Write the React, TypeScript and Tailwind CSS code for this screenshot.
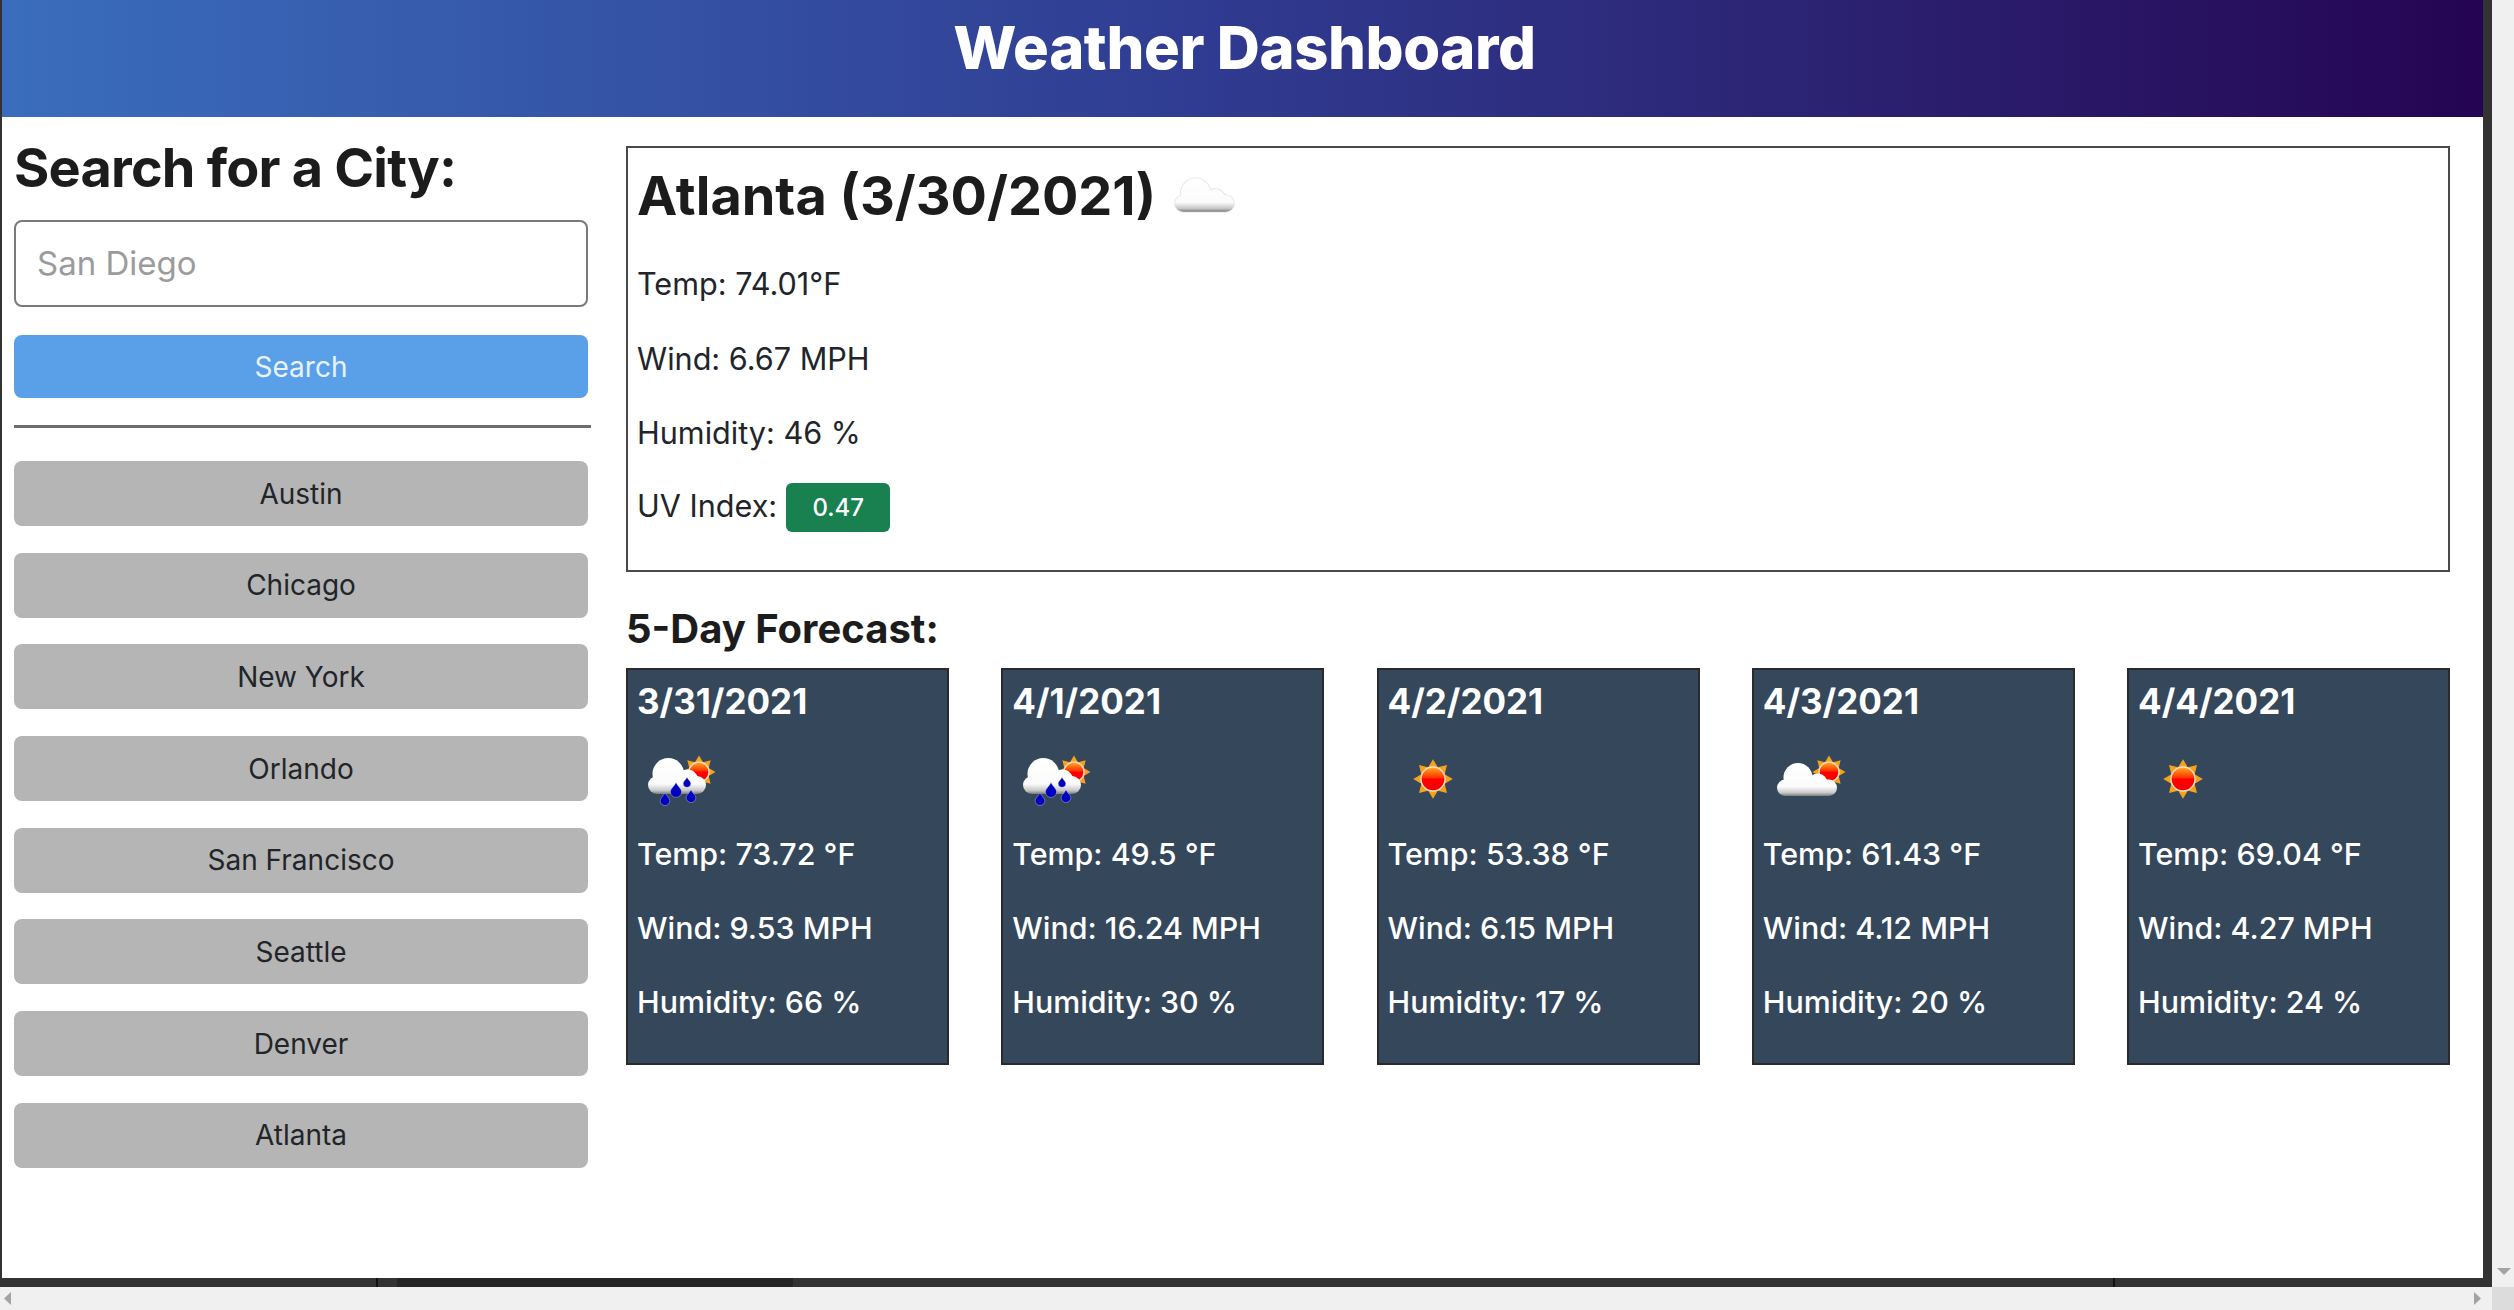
import { useId } from "react";

const cities = ["Austin", "Chicago", "New York", "Orlando", "San Francisco", "Seattle", "Denver", "Atlanta"];

type Kind = "rain" | "sun" | "cloudsun";

const forecast: { date: string; kind: Kind; temp: string; wind: string; humidity: string }[] = [
  { date: "3/31/2021", kind: "rain", temp: "73.72", wind: "9.53", humidity: "66" },
  { date: "4/1/2021", kind: "rain", temp: "49.5", wind: "16.24", humidity: "30" },
  { date: "4/2/2021", kind: "sun", temp: "53.38", wind: "6.15", humidity: "17" },
  { date: "4/3/2021", kind: "cloudsun", temp: "61.43", wind: "4.12", humidity: "20" },
  { date: "4/4/2021", kind: "sun", temp: "69.04", wind: "4.27", humidity: "24" },
];

function Sun({ cx, cy, r }: { cx: number; cy: number; r: number }) {
  const id = useId();
  const points: string[] = [];
  for (let i = 0; i < 16; i++) {
    const a = (i * Math.PI) / 8 - Math.PI / 2;
    const d = i % 2 === 0 ? r * 1.65 : r * 1.05;
    points.push(`${cx + d * Math.cos(a)},${cy + d * Math.sin(a)}`);
  }
  return (
    <g>
      <defs>
        <linearGradient id={id} x1="0" y1="0" x2="0" y2="1">
          <stop offset="0" stopColor="#ffb020" />
          <stop offset="0.45" stopColor="#ff3000" />
          <stop offset="0.5" stopColor="#ff0000" />
          <stop offset="1" stopColor="#f40000" />
        </linearGradient>
      </defs>
      <polygon points={points.join(" ")} fill="#f5a21c" />
      <circle cx={cx} cy={cy} r={r} fill={`url(#${id})`} stroke="#ffdcc0" strokeWidth="1.4" />
    </g>
  );
}

function Cloud({ x, y, w, h, outline }: { x: number; y: number; w: number; h: number; outline?: boolean }) {
  const id = useId();
  const bump = h * 0.44;
  const shapes = (
    <>
      <rect x={x} y={y + h * 0.5} width={w} height={h * 0.5} rx={h * 0.25} />
      <circle cx={x + w * 0.35} cy={y + bump} r={bump} />
      <circle cx={x + w * 0.68} cy={y + h * 0.62} r={h * 0.3} />
    </>
  );
  return (
    <g>
      <defs>
        <linearGradient id={id} gradientUnits="userSpaceOnUse" x1="0" y1={y} x2="0" y2={y + h}>
          <stop offset="0" stopColor="#ffffff" />
          <stop offset="0.72" stopColor="#fbfbfb" />
          <stop offset="0.9" stopColor="#c8c8c8" />
          <stop offset="1" stopColor="#7c7c7c" />
        </linearGradient>
      </defs>
      {outline && (
        <g fill="#e2e2e2" stroke="#e2e2e2" strokeWidth="1.6">
          {shapes}
        </g>
      )}
      <g fill={`url(#${id})`}>{shapes}</g>
    </g>
  );
}

function Drop({ x, y, s }: { x: number; y: number; s: number }) {
  return (
    <path
      d={`M${x} ${y - s * 1.5} C${x + s * 0.4} ${y - s * 0.7} ${x + s} ${y - s * 0.4} ${x + s} ${y + s * 0.15} A${s} ${s} 0 0 1 ${x - s} ${y + s * 0.15} C${x - s} ${y - s * 0.4} ${x - s * 0.4} ${y - s * 0.7} ${x} ${y - s * 1.5}Z`}
      fill="#0000c0"
      stroke="#e8e8f0"
      strokeOpacity="0.45"
      strokeWidth="0.8"
    />
  );
}

function WeatherIcon({ kind }: { kind: Kind }) {
  return (
    <svg viewBox="0 0 90 70" className="mt-[21px] w-[90px] h-[70px] block">
      {kind === "sun" && <Sun cx={45} cy={35} r={12} />}
      {kind === "rain" && (
        <>
          <Sun cx={62} cy={28} r={10} />
          <Cloud x={11} y={14} w={58} h={36} />
          <Drop x={28} y={56} s={4.8} />
          <Drop x={39} y={47} s={5.6} />
          <Drop x={54} y={53} s={4.8} />
          <Drop x={50} y={39} s={3.8} />
        </>
      )}
      {kind === "cloudsun" && (
        <>
          <Sun cx={66} cy={28} r={10} />
          <Cloud x={14} y={19} w={60} h={33} />
        </>
      )}
    </svg>
  );
}

function Arrow({ dir }: { dir: "left" | "right" | "down" }) {
  if (dir === "down") {
    return (
      <svg viewBox="0 0 14 7" className="w-[14px] h-[7px] block">
        <path d="M0 0H14L7 7Z" fill="#a3a3a3" />
      </svg>
    );
  }
  return (
    <svg viewBox="0 0 7 13" className="w-[7px] h-[13px] block">
      <path d={dir === "left" ? "M7 0V13L0 6.5Z" : "M0 0V13L7 6.5Z"} fill="#a3a3a3" />
    </svg>
  );
}

export default function App() {
  return (
    <div className="h-screen flex flex-col overflow-hidden bg-[#f0f0f0] font-['Inter',sans-serif] text-[#212529]">
      <div className="flex flex-1 min-h-0">
        <div className="flex-1 min-w-0 flex flex-col">
          <div className="flex-1 min-h-0 flex flex-col bg-white border-l-2 border-r-[9px] border-[#333333]">
            <header className="h-[117px] shrink-0 flex items-center justify-center pb-[21px] pl-[4px] bg-gradient-to-r from-[#3a6dbd] via-[#2f3a8f] to-[#240453]">
              <h1 className="text-[59.7px] leading-none font-extrabold tracking-[-0.4px] text-white">Weather Dashboard</h1>
            </header>

            <div className="flex-1 min-h-0 flex">
              <aside className="w-[624px] shrink-0 pl-3 pt-[22px]">
                <h2 className="text-[54px] leading-[58px] font-bold tracking-[-0.8px] text-[#1c1c1c]">Search for a City:</h2>
                <input
                  readOnly
                  placeholder="San Diego"
                  className="block mt-[23px] w-[574px] h-[87px] px-[21px] pb-[2px] text-[33px] bg-white border-2 border-[#7a7a7a] rounded-[8px] placeholder:text-[#9b9b9b] outline-none"
                />
                <button className="block mt-7 w-[574px] h-[63px] rounded-[8px] bg-[#5aa0e9] text-[28px] text-[#e9f2fc]">
                  Search
                </button>
                <hr className="mt-[27px] w-[577px] border-t-[3px] border-[#6e6e6e]" />
                <div className="mt-[33px] flex flex-col gap-[26.7px] w-[574px]">
                  {cities.map((c) => (
                    <button key={c} className="h-[65px] rounded-[8px] bg-[#b5b5b5] text-[28px] text-[#212529]">
                      {c}
                    </button>
                  ))}
                </div>
              </aside>

              <main className="w-[1824px] pt-[29px]">
                <section className="h-[426px] border-2 border-[#4a4a4a] pl-[9px] pt-[18px]">
                  <div className="flex items-center h-[60px]">
                    <h2 className="text-[54px] leading-none font-bold text-[#1c1c1c]">Atlanta (3/30/2021)</h2>
                    <svg viewBox="-1 -1 62 36" className="ml-[18px] mt-[-2px] w-[61px] h-[36px]">
                      <Cloud x={0} y={0} w={60} h={34} outline />
                    </svg>
                  </div>
                  <p className="mt-[38px] text-[30.6px] leading-[40px]">Temp: 74.01°F</p>
                  <p className="mt-[35px] text-[30.6px] leading-[40px]">Wind: 6.67 MPH</p>
                  <p className="mt-[34px] text-[30.6px] leading-[40px]">Humidity: 46 %</p>
                  <div className="mt-[30px] flex items-center gap-[9px] text-[30.6px] leading-[40px]">
                    <span className="-translate-y-[2px]">UV Index:</span>
                    <span className="flex items-center justify-center w-[104px] h-[49px] rounded-[6px] bg-[#198050] text-[24px] font-medium text-white">
                      0.47
                    </span>
                  </div>
                </section>

                <h3 className="mt-[33px] text-[40px] leading-[48px] font-bold text-[#1c1c1c]">5-Day Forecast:</h3>

                <div className="mt-[15px] flex justify-between">
                  {forecast.map((d) => (
                    <article
                      key={d.date}
                      className="w-[323px] h-[397px] bg-[#34475b] border-2 border-[#2a2a2a] pl-[9px] pt-[9px] text-white"
                    >
                      <h4 className="text-[35px] leading-[44px] font-bold">{d.date}</h4>
                      <WeatherIcon kind={d.kind} />
                      <p className="mt-[20px] text-[30.4px] leading-[40px] font-medium">Temp: {d.temp} °F</p>
                      <p className="mt-[34px] text-[30.4px] leading-[40px] font-medium">Wind: {d.wind} MPH</p>
                      <p className="mt-[34px] text-[30.4px] leading-[40px] font-medium">Humidity: {d.humidity} %</p>
                    </article>
                  ))}
                </div>
              </main>
            </div>
          </div>

          <div className="h-[9px] shrink-0 flex bg-[#333333]">
            <div className="w-[376px]" />
            <div className="w-[2px] bg-[#111111]" />
            <div className="w-[19px]" />
            <div className="w-[396px] bg-[#252525]" />
            <div className="w-[1320px]" />
            <div className="w-[2px] bg-[#111111]" />
          </div>
        </div>

        <div className="w-[22px] shrink-0 flex flex-col items-center justify-end pb-[12px] pl-[2px]">
          <Arrow dir="down" />
        </div>
      </div>

      <div className="h-[23px] shrink-0 flex">
        <div className="flex-1 flex items-center justify-between pl-[4px] pr-[11px]">
          <Arrow dir="left" />
          <Arrow dir="right" />
        </div>
        <div className="w-[22px] bg-[#dcdcdc]" />
      </div>
    </div>
  );
}
